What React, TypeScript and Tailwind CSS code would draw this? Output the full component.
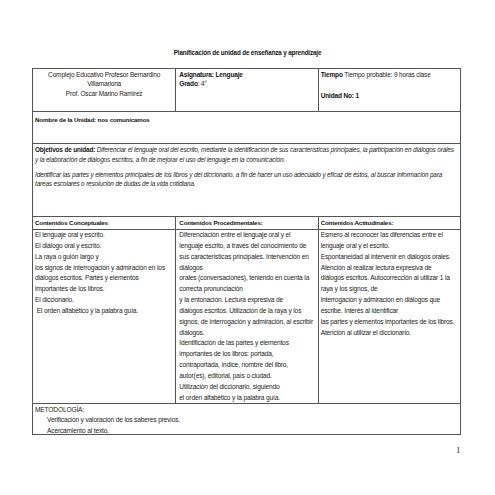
const conceptuales = [
  'El lenguaje oral y escrito.',
  'El diálogo oral y escrito.',
  'La raya o guión largo y',
  'los signos de interrogación y admiración en los',
  'diálogos escritos. Partes y elementos',
  'importantes de los libros.',
  'El diccionario.',
  '\u00a0El orden alfabético y la palabra guía.',
];

const procedimentales = [
  'Diferenciación entre el lenguaje oral y el',
  'lenguaje escrito, a través del conocimiento de',
  'sus características principales. Intervención en',
  'diálogos',
  'orales (conversaciones), teniendo en cuenta la',
  'correcta pronunciación',
  'y la entonación. Lectura expresiva de',
  'diálogos escritos. Utilización de la raya y los',
  'signos, de interrogación y admiración, al escribir',
  'diálogos.',
  'Identificación de las partes y elementos',
  'importantes de los libros: portada,',
  'contraportada, índice, nombre del libro,',
  'autor(es), editorial, país o ciudad.',
  'Utilización del diccionario, siguiendo',
  'el orden alfabético y la palabra guía.',
];

const actitudinales = [
  'Esmero al reconocer las diferencias entre el',
  'lenguaje oral y el escrito.',
  'Espontaneidad al intervenir en diálogos orales.',
  'Atención al realizar lectura expresiva de',
  'diálogos escritos. Autocorrección al utilizar 1 la',
  'raya y los signos, de',
  'interrogación y admiración en diálogos que',
  'escribe. Interés al identificar',
  'las partes y elementos importantes de los libros.',
  'Atención al utilizar el diccionario.',
];

const Lines = ({ lines }: { lines: string[] }) => (
  <div className="leading-[10.85px]">
    {lines.map((line, i) => (
      <div key={i} className="whitespace-nowrap">{line}</div>
    ))}
  </div>
);

const App = () => {
  return (
    <div className="w-[495px] h-[495px] bg-white text-[#222] font-['Liberation_Sans',Arial,sans-serif] text-[6.6px] tracking-[-0.15px] relative">
      <div className="pt-[48px] h-[68px] text-center font-bold text-[6.3px] text-[#111]">
        Planificación de unidad de enseñanza y aprendizaje
      </div>

      <div className="ml-[32px] w-[429px] border border-[#555]">
        {/* encabezado */}
        <div className="grid grid-cols-3 h-[42px] text-[6.5px]">
          <div className="pt-[1px] text-center leading-[9.3px]">
            <div>Complejo Educativo Profesor Bernardino</div>
            <div>Villamariona</div>
            <div>Prof. Oscar Marino Ramirez</div>
          </div>
          <div className="border-l border-[#555] pl-[3px] pt-[1px] leading-[9.3px]">
            <div className="font-bold text-[#111]">Asignatura: Lenguaje</div>
            <div>
              <span className="font-bold text-[#111]">Grado</span>: 4°
            </div>
          </div>
          <div className="border-l border-[#555] pl-[2px] pt-[1px] leading-[9.3px]">
            <div>
              <span className="font-bold text-[#111]">Tiempo</span> Tiempo probable: 9 horas clase
            </div>
            <div className="mt-[12px] font-bold text-[#111]">Unidad No: 1</div>
          </div>
        </div>

        <div className="border-t border-[#555] h-[32px] pl-[2px] pt-[2.5px] leading-[10px] text-[6.2px] font-bold text-[#111]">
          Nombre de la Unidad: nos comunicamos
        </div>

        <div className="border-t border-[#555] h-[73px] pl-[2px] pt-[1px] leading-[9.8px] text-[6.4px] italic">
          <div className="whitespace-nowrap">
            <span className="font-bold not-italic text-[#111]">Objetivos de unidad:</span> Diferenciar el lenguaje oral del escrito, mediante la identificación de sus características principales, la participación en diálogos orales
          </div>
          <div className="whitespace-nowrap">
            y la elaboración de diálogos escritos, a fin de mejorar el uso del lenguaje en la comunicación.
          </div>
          <div className="mt-[5px] whitespace-nowrap">
            Identificar las partes y elementos principales de los libros y del diccionario, a fin de hacer un uso adecuado y eficaz de éstos, al buscar información para
          </div>
          <div className="whitespace-nowrap">tareas escolares o resolución de dudas de la vida cotidiana.</div>
        </div>

        {/* contenidos */}
        <div className="border-t border-[#555] grid grid-cols-3 h-[13px] leading-[12px] text-[6.2px] font-bold text-[#111]">
          <div className="pl-[2px]">
            Contenidos Conceptuales<span className="font-normal">:</span>
          </div>
          <div className="border-l border-[#555] pl-[3px]">Contenidos Procedimentales:</div>
          <div className="border-l border-[#555] pl-[2px]">Contenidos Actitudinales:</div>
        </div>
        <div className="border-t border-[#555] grid grid-cols-3 h-[174px]">
          <div className="pl-[2px]">
            <Lines lines={conceptuales} />
          </div>
          <div className="border-l border-[#555] pl-[3px]">
            <Lines lines={procedimentales} />
          </div>
          <div className="border-l border-[#555] pl-[2px]">
            <Lines lines={actitudinales} />
          </div>
        </div>

        <div className="border-t border-[#555] h-[31px] pl-[2px] pt-[0.5px] leading-[10.5px]">
          <div>METODOLOGÍA:</div>
          <div className="pl-[12px]">Verificación y valoración de los saberes previos.</div>
          <div className="pl-[12px]">Acercamiento al texto.</div>
        </div>
      </div>

      <div className="absolute left-[456px] top-[444px] font-['Liberation_Serif',serif] text-[9px] text-[#333]">1</div>
    </div>
  );
};

export default App;
